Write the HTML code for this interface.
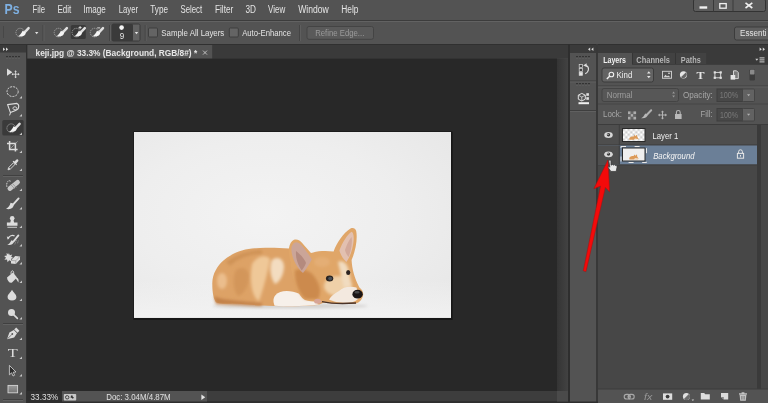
<!DOCTYPE html>
<html><head><meta charset="utf-8"><title>Ps</title>
<style>html,body{margin:0;padding:0;width:768px;height:403px;overflow:hidden;background:#535353}svg{display:block}text{font-family:"Liberation Sans",sans-serif}</style>
</head><body>
<svg width="768" height="403" viewBox="0 0 768 403">
<defs><filter id="tb" x="-5%" y="-30%" width="110%" height="160%"><feGaussianBlur stdDeviation="0.28"/></filter></defs>
<rect x="0" y="0" width="768" height="403" fill="#535353" />
<rect x="0" y="20" width="768" height="1" fill="#3c3c3c" />
<rect x="0" y="21" width="768" height="1" fill="#626262" />
<rect x="0" y="44" width="768" height="14.5" fill="#3a3a3a" />
<rect x="0" y="44" width="768" height="1" fill="#303030" />
<rect x="27" y="58.4" width="530" height="332.6" fill="#282828" />
<rect x="0" y="52.5" width="26" height="350.5" fill="#535353" />
<rect x="26" y="44" width="1" height="359" fill="#303030" />
<rect x="27.5" y="45" width="184.7" height="13.4" fill="#535353" />
<rect x="28" y="391" width="179" height="12" fill="#535353" />
<rect x="207" y="391" width="350" height="10" fill="#3d3d3d" />
<rect x="207" y="401" width="350" height="2" fill="#333333" />
<defs><linearGradient id="vs" x1="0" y1="0" x2="1" y2="0"><stop offset="0" stop-color="#343434"/><stop offset="1" stop-color="#424242"/></linearGradient></defs>
<rect x="557" y="58.4" width="11" height="332.6" fill="url(#vs)" />
<rect x="557" y="391" width="11" height="10.5" fill="#4a4a4a" />
<rect x="568" y="44" width="2" height="359" fill="#2e2e2e" />
<rect x="570" y="53" width="26" height="350" fill="#535353" />
<rect x="596" y="44" width="2" height="359" fill="#383838" />
<rect x="598" y="53" width="170" height="350" fill="#535353" />
<g font-family="Liberation Sans, sans-serif">
<text x="4.5" y="14.3" font-size="15.5" fill="#7eb0e2" font-weight="bold" font-style="normal" textLength="15.0" lengthAdjust="spacingAndGlyphs" filter="url(#tb)" >Ps</text>
<text x="32.5" y="13" font-size="10" fill="#e4e4e4" font-weight="normal" font-style="normal" textLength="12.5" lengthAdjust="spacingAndGlyphs" filter="url(#tb)" >File</text>
<text x="57.5" y="13" font-size="10" fill="#e4e4e4" font-weight="normal" font-style="normal" textLength="13.8" lengthAdjust="spacingAndGlyphs" filter="url(#tb)" >Edit</text>
<text x="83.3" y="13" font-size="10" fill="#e4e4e4" font-weight="normal" font-style="normal" textLength="22.5" lengthAdjust="spacingAndGlyphs" filter="url(#tb)" >Image</text>
<text x="118.7" y="13" font-size="10" fill="#e4e4e4" font-weight="normal" font-style="normal" textLength="19.3" lengthAdjust="spacingAndGlyphs" filter="url(#tb)" >Layer</text>
<text x="150.3" y="13" font-size="10" fill="#e4e4e4" font-weight="normal" font-style="normal" textLength="17.7" lengthAdjust="spacingAndGlyphs" filter="url(#tb)" >Type</text>
<text x="180.5" y="13" font-size="10" fill="#e4e4e4" font-weight="normal" font-style="normal" textLength="21.7" lengthAdjust="spacingAndGlyphs" filter="url(#tb)" >Select</text>
<text x="215" y="13" font-size="10" fill="#e4e4e4" font-weight="normal" font-style="normal" textLength="18.3" lengthAdjust="spacingAndGlyphs" filter="url(#tb)" >Filter</text>
<text x="245.5" y="13" font-size="10" fill="#e4e4e4" font-weight="normal" font-style="normal" textLength="10.5" lengthAdjust="spacingAndGlyphs" filter="url(#tb)" >3D</text>
<text x="268" y="13" font-size="10" fill="#e4e4e4" font-weight="normal" font-style="normal" textLength="17.2" lengthAdjust="spacingAndGlyphs" filter="url(#tb)" >View</text>
<text x="298.2" y="13" font-size="10" fill="#e4e4e4" font-weight="normal" font-style="normal" textLength="30.6" lengthAdjust="spacingAndGlyphs" filter="url(#tb)" >Window</text>
<text x="341.3" y="13" font-size="10" fill="#e4e4e4" font-weight="normal" font-style="normal" textLength="17.2" lengthAdjust="spacingAndGlyphs" filter="url(#tb)" >Help</text>
</g>
<g>
<rect x="693.5" y="-1" width="72" height="12.5" fill="#5c5c5c" rx="2" stroke="#333" stroke-width="1"/>
<rect x="713" y="0" width="1" height="11.5" fill="#3a3a3a" />
<rect x="732.5" y="0" width="1" height="11.5" fill="#3a3a3a" />
<rect x="699.5" y="6.3" width="7.7" height="2.4" fill="#f0f0f0" />
<rect x="719.8" y="3.6" width="6.4" height="4.6" fill="none" stroke="#f0f0f0" stroke-width="1.3"/>
<path d="M745.5 2.8 L752.3 8 M752.3 2.8 L745.5 8" stroke="#f0f0f0" stroke-width="1.6" fill="none"/>
</g>
<rect x="3" y="26.5" width="1" height="1" fill="#3c3c3c" />
<rect x="3" y="28.5" width="1" height="1" fill="#3c3c3c" />
<rect x="3" y="30.5" width="1" height="1" fill="#3c3c3c" />
<rect x="3" y="32.5" width="1" height="1" fill="#3c3c3c" />
<rect x="3" y="34.5" width="1" height="1" fill="#3c3c3c" />
<rect x="3" y="36.5" width="1" height="1" fill="#3c3c3c" />
<rect x="42.5" y="25" width="1" height="16" fill="#444" />
<rect x="43.5" y="25" width="1" height="16" fill="#5e5e5e" />
<rect x="109" y="25" width="1" height="16" fill="#444" />
<rect x="110" y="25" width="1" height="16" fill="#5e5e5e" />
<rect x="144.7" y="25" width="1" height="16" fill="#444" />
<rect x="145.7" y="25" width="1" height="16" fill="#5e5e5e" />
<rect x="299" y="25" width="1" height="16" fill="#444" />
<rect x="300" y="25" width="1" height="16" fill="#5e5e5e" />
<path d="M35 32 L38.4 32 L36.7 34.2 Z" fill="#e0e0e0"/>
<rect x="70.8" y="25" width="15" height="14" fill="#3a3a3a" rx="1.5"/>
<g transform="translate(22.6,32.6)">
<circle cx="-2.4" cy="0" r="4.3" fill="none" stroke="#b0b0b0" stroke-width="0.8" stroke-dasharray="1.3 0.8"/>
<path d="M6 -4.4 L2.2 -0.4" stroke="#e0e0e0" stroke-width="2.5" stroke-linecap="round"/>
<path d="M3.2 -0.2 C3.2 2.8 0.6 4.2 -4.8 3.7 C-2.6 2.7 -1 0.5 0 -1.9 Z" fill="#f4f4f4"/>
</g>
<g transform="translate(60.9,32.6)">
<circle cx="-2.4" cy="0" r="4.3" fill="none" stroke="#b0b0b0" stroke-width="0.8" stroke-dasharray="1.3 0.8"/>
<path d="M6 -4.4 L2.2 -0.4" stroke="#e0e0e0" stroke-width="2.5" stroke-linecap="round"/>
<path d="M3.2 -0.2 C3.2 2.8 0.6 4.2 -4.8 3.7 C-2.6 2.7 -1 0.5 0 -1.9 Z" fill="#f4f4f4"/>
</g>
<g transform="translate(78.8,32.6)">
<circle cx="-2.4" cy="0" r="4.3" fill="none" stroke="#b0b0b0" stroke-width="0.8" stroke-dasharray="1.3 0.8"/>
<path d="M6 -4.4 L2.2 -0.4" stroke="#e0e0e0" stroke-width="2.5" stroke-linecap="round"/>
<path d="M3.2 -0.2 C3.2 2.8 0.6 4.2 -4.8 3.7 C-2.6 2.7 -1 0.5 0 -1.9 Z" fill="#f4f4f4"/>
<path d="M-0.2 -5 h3 M1.3 -6.5 v3" stroke="#e8e8e8" stroke-width="0.9"/>
</g>
<g transform="translate(97,32.6)">
<circle cx="-2.4" cy="0" r="4.3" fill="none" stroke="#b0b0b0" stroke-width="0.8" stroke-dasharray="1.3 0.8"/>
<path d="M6 -4.4 L2.2 -0.4" stroke="#e0e0e0" stroke-width="2.5" stroke-linecap="round"/>
<path d="M3.2 -0.2 C3.2 2.8 0.6 4.2 -4.8 3.7 C-2.6 2.7 -1 0.5 0 -1.9 Z" fill="#f4f4f4"/>
<path d="M0.2 -4.7 h3" stroke="#e8e8e8" stroke-width="0.9"/>
</g>
<rect x="112" y="24" width="21" height="17" fill="#3a3a3a" rx="1.5"/>
<rect x="133" y="24" width="7" height="17" fill="#626262" />
<rect x="112" y="24" width="28" height="17" fill="none" rx="1.5" stroke="#3a3a3a" stroke-width="1"/>
<circle cx="121.6" cy="27.6" r="2.3" fill="#f4f4f4"/>
<path d="M134.8 32 L138.2 32 L136.5 34.2 Z" fill="#e6e6e6"/>
<text x="119.7" y="38.6" font-size="8.5" fill="#e4e4e4" font-weight="normal" font-style="normal" textLength="4.5" lengthAdjust="spacingAndGlyphs" filter="url(#tb)" >9</text>
<rect x="148.5" y="28" width="9" height="9" fill="#646464" stroke="#3e3e3e" stroke-width="1" rx="1"/>
<rect x="229.3" y="28" width="9" height="9" fill="#646464" stroke="#3e3e3e" stroke-width="1" rx="1"/>
<text x="161.3" y="35.6" font-size="9.6" fill="#e4e4e4" font-weight="normal" font-style="normal" textLength="63.0" lengthAdjust="spacingAndGlyphs" filter="url(#tb)" >Sample All Layers</text>
<text x="242.2" y="35.6" font-size="9.6" fill="#e4e4e4" font-weight="normal" font-style="normal" textLength="48.8" lengthAdjust="spacingAndGlyphs" filter="url(#tb)" >Auto-Enhance</text>
<rect x="307" y="26.5" width="66.5" height="12.8" fill="#5a5a5a" rx="2" stroke="#444" stroke-width="1"/>
<text x="315.2" y="35.6" font-size="9.6" fill="#9a9a9a" font-weight="normal" font-style="normal" textLength="49.1" lengthAdjust="spacingAndGlyphs" filter="url(#tb)" >Refine Edge...</text>
<rect x="734.5" y="27" width="40" height="13" fill="#5e5e5e" rx="2" stroke="#3c3c3c" stroke-width="1"/>
<text x="740" y="36" font-size="9.6" fill="#e4e4e4" font-weight="normal" font-style="normal" textLength="26.5" lengthAdjust="spacingAndGlyphs" filter="url(#tb)" >Essenti</text>
<text x="35.5" y="55.8" font-size="9.4" fill="#e6e6e6" font-weight="bold" font-style="normal" textLength="161.7" lengthAdjust="spacingAndGlyphs" filter="url(#tb)" >keji.jpg @ 33.3% (Background, RGB/8#) *</text>
<path d="M203 50.6 L207 54.6 M207 50.6 L203 54.6" stroke="#c8c8c8" stroke-width="0.9"/>
<path d="M3 47.6 L5.2 49.3 L3 51 Z M6 47.6 L8.2 49.3 L6 51 Z" fill="#d8d8d8"/>
<rect x="6" y="56" width="2" height="1.6" fill="#333" />
<rect x="6" y="57.6" width="2" height="0.8" fill="#6a6a6a" />
<rect x="9" y="56" width="2" height="1.6" fill="#333" />
<rect x="9" y="57.6" width="2" height="0.8" fill="#6a6a6a" />
<rect x="12" y="56" width="2" height="1.6" fill="#333" />
<rect x="12" y="57.6" width="2" height="0.8" fill="#6a6a6a" />
<rect x="15" y="56" width="2" height="1.6" fill="#333" />
<rect x="15" y="57.6" width="2" height="0.8" fill="#6a6a6a" />
<rect x="18" y="56" width="2" height="1.6" fill="#333" />
<rect x="18" y="57.6" width="2" height="0.8" fill="#6a6a6a" />
<path d="M590.2 47.6 L588 49.3 L590.2 51 Z M593.4 47.6 L591.2 49.3 L593.4 51 Z" fill="#d8d8d8"/>
<path d="M759.6 47.6 L761.8 49.3 L759.6 51 Z M762.8 47.6 L765 49.3 L762.8 51 Z" fill="#d8d8d8"/>
<rect x="576" y="56" width="2" height="1.6" fill="#333" />
<rect x="576" y="57.6" width="2" height="0.8" fill="#6a6a6a" />
<rect x="579" y="56" width="2" height="1.6" fill="#333" />
<rect x="579" y="57.6" width="2" height="0.8" fill="#6a6a6a" />
<rect x="582" y="56" width="2" height="1.6" fill="#333" />
<rect x="582" y="57.6" width="2" height="0.8" fill="#6a6a6a" />
<rect x="585" y="56" width="2" height="1.6" fill="#333" />
<rect x="585" y="57.6" width="2" height="0.8" fill="#6a6a6a" />
<rect x="588" y="56" width="2" height="1.6" fill="#333" />
<rect x="588" y="57.6" width="2" height="0.8" fill="#6a6a6a" />
<rect x="576" y="83" width="2" height="1.6" fill="#333" />
<rect x="576" y="84.6" width="2" height="0.8" fill="#6a6a6a" />
<rect x="579" y="83" width="2" height="1.6" fill="#333" />
<rect x="579" y="84.6" width="2" height="0.8" fill="#6a6a6a" />
<rect x="582" y="83" width="2" height="1.6" fill="#333" />
<rect x="582" y="84.6" width="2" height="0.8" fill="#6a6a6a" />
<rect x="585" y="83" width="2" height="1.6" fill="#333" />
<rect x="585" y="84.6" width="2" height="0.8" fill="#6a6a6a" />
<rect x="588" y="83" width="2" height="1.6" fill="#333" />
<rect x="588" y="84.6" width="2" height="0.8" fill="#6a6a6a" />
<rect x="570" y="80.5" width="26" height="1" fill="#3e3e3e" />
<rect x="570" y="81.5" width="26" height="1" fill="#606060" />
<rect x="570" y="110" width="26" height="1" fill="#3e3e3e" />
<rect x="570" y="111" width="26" height="1" fill="#606060" />
<g stroke="#dcdcdc" stroke-width="0.9" fill="none">
<rect x="579.2" y="64.5" width="3.2" height="3" fill="#444" stroke-width="0.7"/>
<rect x="579.2" y="68.4" width="3.2" height="3" fill="#444" stroke-width="0.7"/>
<rect x="579.2" y="72.3" width="3.2" height="3" fill="#e4e4e4" stroke-width="0.7"/>
<path d="M585.2 73.8 C589.4 71.6 589.6 66.6 585.8 65.6" stroke-width="1.1"/>
<path d="M583.2 65.6 L586.6 63.2 L586.8 67 Z" fill="#dcdcdc" stroke="none"/>
</g>
<g fill="#e2e2e2">
<path d="M578.3 95.2 L581.8 93.4 L585.3 95.2 L585.3 99.2 L581.8 101 L578.3 99.2 Z" fill="none" stroke="#e2e2e2" stroke-width="1"/>
<path d="M578.3 95.2 L581.8 97 L585.3 95.2 M581.8 97 L581.8 101" fill="none" stroke="#e2e2e2" stroke-width="0.8"/>
<rect x="586.3" y="93.2" width="2.6" height="2.6" fill="#e2e2e2" />
<rect x="586.3" y="97.2" width="2.6" height="2.6" fill="#e2e2e2" />
<rect x="578.5" y="102.2" width="10.5" height="2" fill="#f0f0f0" />
</g>
<rect x="598" y="53" width="170" height="11" fill="#424242" />
<rect x="598" y="53" width="34" height="12" fill="#535353" />
<rect x="632" y="53" width="1" height="11" fill="#353535" />
<rect x="675" y="53" width="1" height="11" fill="#353535" />
<rect x="706.5" y="53" width="1" height="11" fill="#353535" />
<rect x="707.5" y="53" width="61" height="11" fill="#3a3a3a" />
<rect x="632" y="64" width="136" height="1" fill="#3e3e3e" />
<text x="603.2" y="63" font-size="9.4" fill="#f0f0f0" font-weight="bold" font-style="normal" textLength="22.8" lengthAdjust="spacingAndGlyphs" filter="url(#tb)" >Layers</text>
<text x="636.3" y="63" font-size="9.4" fill="#b4b4b4" font-weight="bold" font-style="normal" textLength="33.7" lengthAdjust="spacingAndGlyphs" filter="url(#tb)" >Channels</text>
<text x="680.8" y="63" font-size="9.4" fill="#b4b4b4" font-weight="bold" font-style="normal" textLength="20.0" lengthAdjust="spacingAndGlyphs" filter="url(#tb)" >Paths</text>
<path d="M755.3 58.8 L758.3 58.8 L756.8 60.8 Z" fill="#d0d0d0"/>
<rect x="759.5" y="57.4" width="5" height="1" fill="#d0d0d0" />
<rect x="759.5" y="59.4" width="5" height="1" fill="#d0d0d0" />
<rect x="759.5" y="61.4" width="5" height="1" fill="#d0d0d0" />
<rect x="602" y="68" width="51.5" height="14" fill="#636363" rx="2" stroke="#3c3c3c" stroke-width="1"/>
<circle cx="611.4" cy="74.5" r="2.3" fill="none" stroke="#f0f0f0" stroke-width="1.1"/><path d="M609.6 76.3 L606.8 79" stroke="#f0f0f0" stroke-width="1.4"/>
<text x="616.6" y="77.8" font-size="9.6" fill="#f0f0f0" font-weight="normal" font-style="normal" textLength="15.7" lengthAdjust="spacingAndGlyphs" filter="url(#tb)" >Kind</text>
<path d="M647 73.6 L650.6 73.6 L648.8 71.3 Z M647 76 L650.6 76 L648.8 78.3 Z" fill="#e6e6e6"/>
<g>
<g transform="translate(0 0.8)">
<rect x="662.5" y="70.5" width="9" height="7" fill="none" stroke="#d4d4d4" stroke-width="0.9"/>
<path d="M663.5 76.5 L665.5 74 L667 75.5 L668.3 74.6 L670.5 76.5 Z" fill="#d4d4d4"/>
<rect x="668.2" y="71.8" width="1.6" height="1.4" fill="#d4d4d4" />
</g>
<circle cx="683.5" cy="74.8" r="3.6" fill="#e6e6e6"/><path d="M680.9 77.3 A3.6 3.6 0 0 0 686 72.3 Z" fill="#666"/>
<text x="696.6" y="78.6" font-size="10.5" font-weight="bold" fill="#e6e6e6" style="font-family:'Liberation Serif',serif" textLength="8" lengthAdjust="spacingAndGlyphs" filter="url(#tb)">T</text>
<rect x="714.9" y="72.4" width="5.8" height="5.4" fill="none" stroke="#e0e0e0" stroke-width="0.9"/>
<rect x="713.7" y="71.3" width="2.2" height="2.2" fill="#e0e0e0" />
<rect x="719.6" y="71.3" width="2.2" height="2.2" fill="#e0e0e0" />
<rect x="713.7" y="76.7" width="2.2" height="2.2" fill="#e0e0e0" />
<rect x="719.6" y="76.7" width="2.2" height="2.2" fill="#e0e0e0" />
<path d="M733.5 70.8 L736.5 70.8 L738.3 72.6 L738.3 78.6 L733.5 78.6 Z" fill="#7a7a7a" stroke="#e0e0e0" stroke-width="0.9"/>
<rect x="730.6" y="75" width="4.6" height="4.6" fill="#e6e6e6" />
<rect x="749.5" y="69.4" width="5.5" height="11" fill="#3c3c3c" rx="0.8"/>
<rect x="750" y="69.8" width="4.5" height="4.6" fill="#8a8a8a" rx="0.6"/>
</g>
<rect x="598" y="85.5" width="170" height="1" fill="#404040" />
<rect x="598" y="86.5" width="170" height="1" fill="#606060" />
<rect x="602" y="88.5" width="76.5" height="13" fill="#575757" rx="2" stroke="#444" stroke-width="1"/>
<text x="606.7" y="97.7" font-size="9.6" fill="#9c9c9c" font-weight="normal" font-style="normal" textLength="25.8" lengthAdjust="spacingAndGlyphs" filter="url(#tb)" >Normal</text>
<path d="M672.2 93.4 L675 93.4 L673.6 91.6 Z M672.2 95.6 L675 95.6 L673.6 97.4 Z" fill="#9a9a9a"/>
<text x="683" y="97.7" font-size="9.6" fill="#a6a6a6" font-weight="normal" font-style="normal" textLength="29.8" lengthAdjust="spacingAndGlyphs" filter="url(#tb)" >Opacity:</text>
<rect x="717" y="89" width="25.5" height="12.5" fill="#484848" stroke="#3e3e3e" stroke-width="1"/>
<text x="719.8" y="97.8" font-size="9.2" fill="#7a7a7a" font-weight="normal" font-style="normal" textLength="18.5" lengthAdjust="spacingAndGlyphs" filter="url(#tb)" >100%</text>
<rect x="742.5" y="89" width="12" height="12.5" fill="#626262" stroke="#444" stroke-width="1" rx="1"/>
<path d="M747 94.3 L750.2 94.3 L748.6 96.3 Z" fill="#b0b0b0"/>
<rect x="598" y="103.5" width="170" height="1" fill="#474747" />
<text x="603" y="116.6" font-size="9.6" fill="#a6a6a6" font-weight="normal" font-style="normal" textLength="19" lengthAdjust="spacingAndGlyphs" filter="url(#tb)" >Lock:</text>
<rect x="628.0" y="111.4" width="2.7" height="2.7" fill="#acacac" />
<rect x="630.7" y="111.4" width="2.7" height="2.7" fill="#666" />
<rect x="633.4" y="111.4" width="2.7" height="2.7" fill="#acacac" />
<rect x="628.0" y="114.10000000000001" width="2.7" height="2.7" fill="#666" />
<rect x="630.7" y="114.10000000000001" width="2.7" height="2.7" fill="#acacac" />
<rect x="633.4" y="114.10000000000001" width="2.7" height="2.7" fill="#666" />
<rect x="628.0" y="116.80000000000001" width="2.7" height="2.7" fill="#acacac" />
<rect x="630.7" y="116.80000000000001" width="2.7" height="2.7" fill="#666" />
<rect x="633.4" y="116.80000000000001" width="2.7" height="2.7" fill="#acacac" />
<path d="M651.2 110.2 L646.6 115" stroke="#b0b0b0" stroke-width="2" stroke-linecap="round"/><path d="M647.4 114.8 C647.6 117.4 644.6 118.8 641 118.2 C642.8 117.4 644.2 116 645.2 113.6 Z" fill="#b8b8b8"/>
<path d="M662.5 111.6 v6.8 M659.1 115 h6.8" stroke="#b4b4b4" stroke-width="1"/><path d="M662.5 110.4 l-1.6 1.9 h3.2 Z M662.5 119.6 l-1.6 -1.9 h3.2 Z M657.9 115 l1.9 -1.6 v3.2 Z M667.1 115 l-1.9 -1.6 v3.2 Z" fill="#b4b4b4"/>
<path d="M676.4 114 v-1.6 a1.9 1.9 0 0 1 3.8 0 v1.6" fill="none" stroke="#b4b4b4" stroke-width="1.1"/>
<rect x="675" y="114" width="6.6" height="5" fill="#b8b8b8" />
<text x="700.5" y="116.6" font-size="9.6" fill="#a6a6a6" font-weight="normal" font-style="normal" textLength="12.0" lengthAdjust="spacingAndGlyphs" filter="url(#tb)" >Fill:</text>
<rect x="717" y="108.5" width="25.5" height="12.5" fill="#484848" stroke="#3e3e3e" stroke-width="1"/>
<text x="720" y="117.9" font-size="9.2" fill="#7a7a7a" font-weight="normal" font-style="normal" textLength="18" lengthAdjust="spacingAndGlyphs" filter="url(#tb)" >100%</text>
<rect x="742.5" y="108.5" width="12" height="12.5" fill="#626262" stroke="#444" stroke-width="1" rx="1"/>
<path d="M747 113.8 L750.2 113.8 L748.6 115.8 Z" fill="#b0b0b0"/>
<rect x="598" y="124.5" width="159" height="265" fill="#474747" />
<rect x="598" y="124" width="170" height="1" fill="#3c3c3c" />
<rect x="757" y="125" width="11" height="264" fill="#3a3a3a" />
<rect x="761" y="125" width="7" height="264" fill="#474747" />
<rect x="598" y="125" width="159" height="19.5" fill="#4e4e4e" />
<rect x="598" y="144.5" width="159" height="1" fill="#3e3e3e" />
<rect x="598" y="145.5" width="159" height="19" fill="#6b7f97" />
<rect x="598" y="164.5" width="159" height="1" fill="#3e3e3e" />
<rect x="618.8" y="125" width="1" height="20" fill="#3e3e3e" />
<rect x="618.8" y="145.5" width="1" height="19" fill="#4b5a6c" />
<rect x="598" y="145.5" width="21" height="19" fill="#4e4e4e" />
<rect x="618.8" y="145.5" width="1" height="19" fill="#3e3e3e" />
<ellipse cx="608.5" cy="135" rx="4.3" ry="2.9" fill="#d6d6d6"/><circle cx="608.5" cy="134.8" r="1.7" fill="#3a3a3a"/><circle cx="608.0" cy="134.3" r="0.6" fill="#eee"/>
<ellipse cx="608.5" cy="154.3" rx="4.3" ry="2.9" fill="#d6d6d6"/><circle cx="608.5" cy="154.10000000000002" r="1.7" fill="#3a3a3a"/><circle cx="608.0" cy="153.60000000000002" r="0.6" fill="#eee"/>
<defs><pattern id="chk" x="622.5" y="128.5" width="5" height="5" patternUnits="userSpaceOnUse"><rect width="5" height="5" fill="#fff"/><rect width="2.5" height="2.5" fill="#cfcfcf"/><rect x="2.5" y="2.5" width="2.5" height="2.5" fill="#cfcfcf"/></pattern></defs>
<rect x="622.5" y="128.5" width="22.5" height="13" fill="url(#chk)" stroke="#2a2a2a" stroke-width="1"/>
<rect x="622.5" y="148" width="22.5" height="13" fill="#efefef" stroke="#2a2a2a" stroke-width="1"/>
<rect x="621" y="146.5" width="25.5" height="16" fill="none" stroke="#e8e8e8" stroke-width="1" stroke-dasharray="5 8.6"/>
<path d="M629.5 139.79999999999998 C628.6 137.4 631 136.2 633.6 136.4 L634.4 134.79999999999998 L635.4 136.2 L637 134.6 L637.2 136.79999999999998 L638.4 138.6 L638 139.79999999999998 Z" fill="#dc9a58"/>
<path d="M633.6 139.79999999999998 L635 138.6 L638 139.0 L638 139.9 Z" fill="#f6efe6"/>
<path d="M629.5 159.39999999999998 C628.6 157.0 631 155.79999999999998 633.6 156.0 L634.4 154.39999999999998 L635.4 155.79999999999998 L637 154.2 L637.2 156.39999999999998 L638.4 158.2 L638 159.39999999999998 Z" fill="#dc9a58"/>
<path d="M633.6 159.39999999999998 L635 158.2 L638 158.6 L638 159.5 Z" fill="#f6efe6"/>
<text x="652.5" y="138.8" font-size="9.8" fill="#f0f0f0" font-weight="normal" font-style="normal" textLength="25.8" lengthAdjust="spacingAndGlyphs" filter="url(#tb)" >Layer 1</text>
<text x="653.2" y="158.5" font-size="9.8" fill="#f4f4f4" font-weight="normal" font-style="italic" textLength="41.3" lengthAdjust="spacingAndGlyphs" filter="url(#tb)" >Background</text>
<path d="M738.6 153.2 v-1.5 a1.9 1.9 0 0 1 3.8 0 v1.5" fill="none" stroke="#e6e6e6" stroke-width="1"/>
<rect x="737.4" y="153.4" width="6.2" height="4.8" fill="none" stroke="#e6e6e6" stroke-width="1"/>
<rect x="740" y="155" width="1" height="1.6" fill="#e6e6e6" />
<rect x="598" y="389" width="170" height="14" fill="#535353" />
<rect x="598" y="388.5" width="170" height="1" fill="#3c3c3c" />
<g fill="#dcdcdc" stroke="none">
<path d="M22 95.9 L22 98.5 L19.4 98.5 Z" fill="#c8c8c8"/>
<path d="M22 113.9 L22 116.5 L19.4 116.5 Z" fill="#c8c8c8"/>
<path d="M22 132.4 L22 135 L19.4 135 Z" fill="#c8c8c8"/>
<path d="M22 150.4 L22 153 L19.4 153 Z" fill="#c8c8c8"/>
<path d="M22 168.4 L22 171 L19.4 171 Z" fill="#c8c8c8"/>
<path d="M22 188.4 L22 191 L19.4 191 Z" fill="#c8c8c8"/>
<path d="M22 206.9 L22 209.5 L19.4 209.5 Z" fill="#c8c8c8"/>
<path d="M22 225.4 L22 228 L19.4 228 Z" fill="#c8c8c8"/>
<path d="M22 243.9 L22 246.5 L19.4 246.5 Z" fill="#c8c8c8"/>
<path d="M22 261.9 L22 264.5 L19.4 264.5 Z" fill="#c8c8c8"/>
<path d="M22 280.4 L22 283 L19.4 283 Z" fill="#c8c8c8"/>
<path d="M22 298.4 L22 301 L19.4 301 Z" fill="#c8c8c8"/>
<path d="M22 316.9 L22 319.5 L19.4 319.5 Z" fill="#c8c8c8"/>
<path d="M22 337.4 L22 340 L19.4 340 Z" fill="#c8c8c8"/>
<path d="M22 356.4 L22 359 L19.4 359 Z" fill="#c8c8c8"/>
<path d="M22 373.9 L22 376.5 L19.4 376.5 Z" fill="#c8c8c8"/>
<path d="M22 391.9 L22 394.5 L19.4 394.5 Z" fill="#c8c8c8"/>
<rect x="3" y="175" width="20" height="1" fill="#404040" />
<rect x="3" y="176" width="20" height="1" fill="#626262" />
<rect x="3" y="323" width="20" height="1" fill="#404040" />
<rect x="3" y="324" width="20" height="1" fill="#626262" />
<rect x="3" y="399" width="20" height="1" fill="#404040" />
<rect x="3" y="400" width="20" height="1" fill="#626262" />
<path d="M7 68.4 L7 75.8 L12.4 72.3 Z"/>
<path d="M15.6 71 v6.4 M12.4 74.2 h6.4" stroke="#dcdcdc" stroke-width="0.9" fill="none"/><path d="M15.6 70.2 l-1.3 1.5 h2.6 Z M15.6 78.2 l-1.3 -1.5 h2.6 Z M11.6 74.2 l1.5 -1.3 v2.6 Z M19.6 74.2 l-1.5 -1.3 v2.6 Z"/>
<ellipse cx="12.6" cy="91.6" rx="5.6" ry="4.9" fill="none" stroke="#dcdcdc" stroke-width="1" stroke-dasharray="2 1.1"/>
<path d="M7.6 104.6 L17 103.4 C19.6 104.6 19.4 109.4 15.6 110.4 L10.4 112.6 Z" fill="none" stroke="#dcdcdc" stroke-width="1.1" stroke-linejoin="round"/>
<path d="M16.6 107.4 C13.6 105.6 11.6 108.4 14 109.6 C16 110.4 17.6 109.4 16.6 107.4 M10.6 112.4 L9.6 115.4" fill="none" stroke="#dcdcdc" stroke-width="1"/>
<rect x="2.3" y="120" width="21.3" height="15.5" fill="#3a3a3a" rx="1.5"/>
</g>
<g transform="translate(13.6,128.2)">
<circle cx="-2.4" cy="0" r="4.3" fill="none" stroke="#b0b0b0" stroke-width="0.8" stroke-dasharray="1.3 0.8"/>
<path d="M6 -4.4 L2.2 -0.4" stroke="#e0e0e0" stroke-width="2.5" stroke-linecap="round"/>
<path d="M3.2 -0.2 C3.2 2.8 0.6 4.2 -4.8 3.7 C-2.6 2.7 -1 0.5 0 -1.9 Z" fill="#f4f4f4"/>
</g>
<path d="M22 132.4 L22 135 L19.4 135 Z" fill="#c8c8c8"/>
<g fill="#dcdcdc" stroke="none">
<path d="M9.6 141 v8.4 h8 M7 143.6 h8.4 v8" fill="none" stroke="#dcdcdc" stroke-width="1.5"/><path d="M17.6 141.4 L9.8 149.2" stroke="#bdbdbd" stroke-width="0.6" fill="none"/>
<path d="M8 169.8 L8.6 167.6 L13.4 162.8 L15 164.4 L10.2 169.2 Z" fill="none" stroke="#dcdcdc" stroke-width="0.9"/><path d="M8 169.8 L9 167.6 L10.2 168.8 Z"/>
<path d="M12.6 161.6 L16.2 165.2 L17 164.4 L16.2 163.4 L18.2 161.2 C19 160.2 17.6 158.6 16.6 159.6 L14.4 161.6 L13.4 160.8 Z"/>
<path d="M9.8 188.6 L17.6 182.2" stroke="#c8c8c8" stroke-width="4.6" stroke-linecap="round" fill="none"/>
<path d="M11 184.8 l4 4.4 M12.6 183.6 l4 4.4" stroke="#8a8a8a" stroke-width="0.7" fill="none"/>
<path d="M10.6 181.2 C8.2 179.6 5.8 182.6 7 187.4" fill="none" stroke="#dcdcdc" stroke-width="0.9" stroke-dasharray="1.5 0.9"/>
<path d="M18.6 198.4 L13 204.6" stroke="#dcdcdc" stroke-width="1.9" stroke-linecap="round" fill="none"/>
<path d="M13.6 203.8 C14.4 207.8 10.4 210 6 208.8 C8.4 207.8 9.6 206 10.6 202.8 Z"/>
<circle cx="12.2" cy="218.3" r="2.3"/><path d="M11 219.6 h2.4 l0.7 3 h3.4 v3.2 h-10.6 v-3.2 h3.4 Z"/>
<rect x="7.4" y="226.8" width="9.6" height="0.9" fill="#dcdcdc" />
<path d="M18.4 235.4 L13.4 241.6" stroke="#dcdcdc" stroke-width="1.8" stroke-linecap="round" fill="none"/>
<path d="M13.6 241.2 C14 243.8 11 245.4 7 244.8 C9 244 10.4 242.6 11.4 240.2 Z"/>
<path d="M8 238.6 C9 235.8 12.4 234.6 14.6 236" fill="none" stroke="#dcdcdc" stroke-width="1.1"/><path d="M6.8 236.6 L9.8 237.4 L7.8 239.8 Z"/>
<path d="M16.4 240 l-1.6 4.4 M18.4 240.6 l-1.2 3.4" stroke="#bdbdbd" stroke-width="0.6" stroke-dasharray="1 0.8" fill="none"/>
<path d="M8.8 252.8 l1 2.4 l2.4 -0.8 l-1 2.4 l2.2 1.2 l-2.4 0.8 l0.6 2.6 l-2.4 -1.2 l-1.6 2 l-0.6 -2.6 l-2.6 0.2 l1.6 -2 l-1.8 -1.8 l2.6 -0.4 l-0.2 -2.6 l2 1.6 Z"/>
<path d="M11 260.4 L15.2 256 L20 256.4 L20 259.6 L15.8 264 L11 263.6 Z"/><path d="M11 260.4 L15.8 260.8 L20 256.4 M15.8 260.8 L15.8 264" stroke="#8a8a8a" stroke-width="0.6" fill="none"/>
<path d="M7 277.4 L13 272.6 L17 277.6 L12 282.4 C10 283.4 7.4 281.4 7 277.4 Z"/>
<path d="M11.2 274.6 C10.4 271.6 12 270.2 13 271 C14 271.8 13.8 273.8 13.4 275.4" fill="none" stroke="#dcdcdc" stroke-width="0.9"/>
<path d="M16.6 277.4 C18.4 278 19 280 18.4 282.4 C17.4 281.6 17 279.6 15.6 278.6 Z"/>
<path d="M12 289.8 C13.4 292.6 16.4 294.4 16.4 297 A4.4 3.4 0 0 1 7.6 297 C7.6 294.4 10.6 292.6 12 289.8 Z"/>
<circle cx="11.5" cy="312.4" r="3.5"/><path d="M13.6 314.6 L17.4 318.4" stroke="#dcdcdc" stroke-width="1.6" stroke-linecap="round" fill="none"/>
<path d="M7 339.2 L9.4 332.4 L13.8 330 L17 333.2 L14.2 337.4 Z"/><path d="M14.2 329.4 L16.2 327.6 L19.4 330.8 L17.6 332.8 Z"/>
<path d="M7.4 338.8 L11.8 334.6" stroke="#555" stroke-width="0.7" fill="none"/><circle cx="12.3" cy="334" r="0.9" fill="#555"/>
</g>
<text x="7.8" y="356.6" font-size="13.2" fill="#dcdcdc" style="font-family:'Liberation Serif',serif" textLength="10" lengthAdjust="spacingAndGlyphs" filter="url(#tb)">T</text>
<path d="M9.4 365.4 L9.4 374.8 L11.6 372.8 L13 376 L14.6 375.2 L13.2 372.2 L16 372 Z" fill="#2e2e2e" stroke="#d8d8d8" stroke-width="0.8" stroke-linejoin="round"/>
<defs><linearGradient id="rg" x1="0" y1="0" x2="0" y2="1"><stop offset="0" stop-color="#9a9a9a"/><stop offset="1" stop-color="#777"/></linearGradient></defs>
<rect x="8" y="385.4" width="9.6" height="7.4" fill="url(#rg)" stroke="#d4d4d4" stroke-width="0.9"/>
<rect x="27" y="391" width="35" height="12" fill="#2e2e2e" />
<rect x="62" y="391" width="145" height="12" fill="#535353" />
<text x="30.6" y="399.6" font-size="9.4" fill="#e0e0e0" font-weight="normal" font-style="normal" textLength="27.6" lengthAdjust="spacingAndGlyphs" filter="url(#tb)" >33.33%</text>
<rect x="63.8" y="394" width="12.4" height="6.6" fill="#c8c8c8" rx="0.8"/>
<circle cx="67.2" cy="397.3" r="1.7" fill="none" stroke="#333" stroke-width="0.9"/><path d="M71 395.6 l1.6 0 l0 1 l1.4 1.2 l-1.4 1 l-1 -1 l-1 0 Z" fill="#333"/>
<text x="106.2" y="399.6" font-size="9.4" fill="#e0e0e0" font-weight="normal" font-style="normal" textLength="64.5" lengthAdjust="spacingAndGlyphs" filter="url(#tb)" >Doc: 3.04M/4.87M</text>
<path d="M201.4 394.4 L205.2 397.2 L201.4 400 Z" fill="#e4e4e4"/>
<defs><radialGradient id="pbg" cx="0.42" cy="0.45" r="0.75"><stop offset="0" stop-color="#f3f3f3"/><stop offset="0.55" stop-color="#eeeeee"/><stop offset="1" stop-color="#e7e7e7"/></radialGradient>
<filter id="db" x="-5%" y="-5%" width="110%" height="110%"><feGaussianBlur stdDeviation="0.55"/></filter>
<filter id="db2" x="-20%" y="-20%" width="140%" height="140%"><feGaussianBlur stdDeviation="1.6"/></filter>
<clipPath id="pc"><rect x="134" y="132" width="317" height="186"/></clipPath></defs>
<rect x="133.2" y="131.4" width="319.4" height="188.6" fill="#181818" filter="url(#db)" opacity="0.9"/>
<rect x="134" y="132" width="317" height="185.8" fill="url(#pbg)" />
<g clip-path="url(#pc)">
<defs><linearGradient id="fl" x1="0" y1="0" x2="0" y2="1"><stop offset="0" stop-color="#f4f4f4" stop-opacity="0"/><stop offset="1" stop-color="#f4f4f4" stop-opacity="0.8"/></linearGradient></defs><rect x="134" y="280" width="317" height="38" fill="url(#fl)"/>
<ellipse cx="290" cy="306" rx="78" ry="2.6" fill="#d4d2d0" filter="url(#db2)"/>
<g filter="url(#db)">
<path d="M212.3 283 C212.5 274 217 266 224 260 C232 253.5 242 249.5 252 248.6 C262 247.6 275 247.4 289 248.6 L300 262 L330 300 L318 305 C300 306.5 280 306.5 262 305.6 C250 305 240 303.5 232 303.6 C226 304 220 304 216.5 302.5 C213.5 300 212.2 292 212.3 283 Z" fill="#dda266"/>
<g filter="url(#db2)">
<path d="M214 296 C220 300 240 301 262 303 L262 306 L216 304 Z" fill="#c28148"/>
<path d="M252 264 C257 256 266 254 270 259 C268 272 263 290 259 301 C252 298 249 280 252 264 Z" fill="#efc898"/>
<path d="M272 260 C277 256 283 258 284 266 C284 274 280 282 275 284 C270 278 269 266 272 260 Z" fill="#f3dcc0"/>
<ellipse cx="222" cy="281" rx="5" ry="8" fill="#ebbd8c"/>
<path d="M226 262 C236 254 250 250 262 250 L262 254 C250 254 238 258 230 266 Z" fill="#cf9357"/>
<path d="M236 270 C242 266 248 268 249 276 C249 286 244 294 238 296 C233 290 232 278 236 270 Z" fill="#d3965a"/>
</g>
<path d="M275.6 295 C280 290 290 289.6 300 294 C308 297.6 315 301 319 304.6 C304 306.6 288 306.5 274.6 305.7 C272.6 301 273.4 297.6 275.6 295 Z" fill="#f6f0ea"/>
<path d="M291.2 264 C289.4 258 288.2 252 289 248 C289.6 244 291.4 241 294 239.8 C297 238.6 300 240.4 302.6 243.4 C305 246.2 308 249.6 311 253 C313.4 252.2 318 251.2 322 251 C326 250.8 330 251 333.6 251.4 C337 243 343 233 350.5 228.6 C353 227.4 355.4 228.4 356.2 231 C357.6 238 356 250 351.6 260 C351.8 264 352.4 268 353.6 273 C355 278 357 283 359.4 287.4 C362.6 289.6 364 293 362.8 296.6 C361.6 300 359.4 302.6 356 303.4 C348 304.4 338 304.2 330 303 C322 302 312 302 305 300 C298 296 292 280 290.5 263 Z" fill="#e0a668"/>
<g filter="url(#db2)">
<ellipse cx="338" cy="286" rx="14" ry="10" fill="#efd0a8"/>
<path d="M338 262 C342 260 346 262 348 268 L352 286 L344 288 Z" fill="#f1dcc0"/>
<ellipse cx="322" cy="262" rx="8" ry="5" fill="#e4ae74"/>
<path d="M295 270 C300 268 310 270 314 276 C320 284 322 292 318 299 L305 299 C298 292 294 280 295 270 Z" fill="#cc8a4e"/>
</g>
<path d="M339 291 C343 287 350 285.6 356.4 287.6 L359.6 296 C358.4 300 354.4 302.6 348 302.8 C340 303 333 301.8 329 299.6 C331 296 335 293.4 339 291 Z" fill="#f3e9df"/>
<path d="M291.4 249 C291.6 245 293.6 242.2 296.4 242.2 C299.4 242.4 302 245.6 305 249.4 C307.6 252.8 310.4 256.6 311.8 259.6 C309.6 264 306 269.4 303 273 C297 268 291.4 258 291.4 249 Z" fill="#cba598"/>
<path d="M296 251 C300 254 304.6 259 306 263 C304.8 266 303.2 268.6 301.6 270.4 C298 265 295.4 258 296 251 Z" fill="#b48a7e"/>
<path d="M339.4 250.6 C342.4 242.6 347.2 234.4 351.6 231.8 C354.2 232.8 354.4 240 352.4 248 C351 254 348.6 259 346.4 262 C343.2 259 340.6 255 339.4 250.6 Z" fill="#e2c0b0"/>
<path d="M345 250 C347 244 349.6 239 351.6 237 C352.4 242 351.4 250 348.6 257 C346.8 255 345.6 252.6 345 250 Z" fill="#d3a99a"/>
<ellipse cx="317.6" cy="301.2" rx="3.6" ry="2.5" fill="#d7a596"/>
<path d="M322 301.6 C330 303.4 344 303.8 356 303" stroke="#4a3228" stroke-width="1.3" fill="none"/>
<ellipse cx="329.6" cy="278.4" rx="3.7" ry="3" fill="#2a2420"/><ellipse cx="330.2" cy="278.6" rx="2" ry="1.8" fill="#4a5058"/>
<ellipse cx="348.2" cy="272.4" rx="2.1" ry="2.5" fill="#2a2420"/>
<ellipse cx="357.6" cy="294.2" rx="5.2" ry="4.4" fill="#1c1919"/><ellipse cx="357" cy="292.2" rx="2.6" ry="1.2" fill="#4a4848"/>
</g></g>
<rect x="27" y="401.5" width="571" height="1.5" fill="#2e2e2e" />
<g>
<rect x="624.2" y="394.4" width="6" height="4.6" rx="2.3" fill="none" stroke="#a8a8a8" stroke-width="1.1"/><rect x="628.2" y="394.4" width="6" height="4.6" rx="2.3" fill="none" stroke="#a8a8a8" stroke-width="1.1"/>
<rect x="627.6" y="396.2" width="3.4" height="1" fill="#a8a8a8" />
<text x="644" y="399.6" font-size="9.6" font-style="italic" fill="#989898" textLength="8.2" lengthAdjust="spacingAndGlyphs" filter="url(#tb)">fx</text>
<rect x="663" y="393.4" width="9.2" height="6.4" fill="#dedede" />
<circle cx="667.6" cy="396.6" r="1.9" fill="#3a3a3a"/>
<circle cx="686.4" cy="396.5" r="3.5" fill="#e0e0e0"/><path d="M683.9 399 A3.5 3.5 0 0 0 688.9 394 Z" fill="#6a6a6a"/><path d="M691.6 399.4 h2.6 l-1.3 1.6 Z" fill="#d0d0d0"/>
<path d="M700.8 393 h3.4 l1 1.2 h4.6 v5.4 h-9 Z" fill="#dcdcdc"/>
<path d="M721 393 h7.2 v6.6 h-4.4 l-2.8 -2.6 Z" fill="#dcdcdc"/><path d="M721 397 h2.8 v2.6 Z" fill="#8a8a8a"/>
<path d="M739.6 394.8 h6.8 l-0.6 6 h-5.6 Z" fill="#c4c4c4"/><rect x="739" y="393.4" width="8" height="1.1" fill="#dcdcdc"/><rect x="741.6" y="392.4" width="2.8" height="1.2" fill="#dcdcdc"/><path d="M741.6 396 v3.6 M743 396 v3.6 M744.4 396 v3.6" stroke="#666" stroke-width="0.6"/>
</g>
<path d="M608 160 L609.6 191.8 L605.3 187.4 L586 271.6 L583.3 270.8 L600.6 186 L593.8 188.8 Z" fill="#f40a0a" stroke="#b00c0c" stroke-width="0.5" stroke-linejoin="round"/>
<path d="M608.9 161 a1 1 0 0 1 2 0 v3.7 l1.3 -0.7 l0.7 0.7 l1.2 -0.5 l0.7 0.8 l1 -0.2 q0.8 0.4 0.6 1.8 l-0.8 3.8 h-4.8 l-2.4 -3.5 q-0.3 -1.1 0.7 -1 l0.8 0.7 Z" fill="#e8e8e8" stroke="#3a3a3a" stroke-width="0.7" stroke-linejoin="round" transform="translate(609.9 160) scale(1.1) translate(-609.9 -160)"/>
</svg>
</body></html>
